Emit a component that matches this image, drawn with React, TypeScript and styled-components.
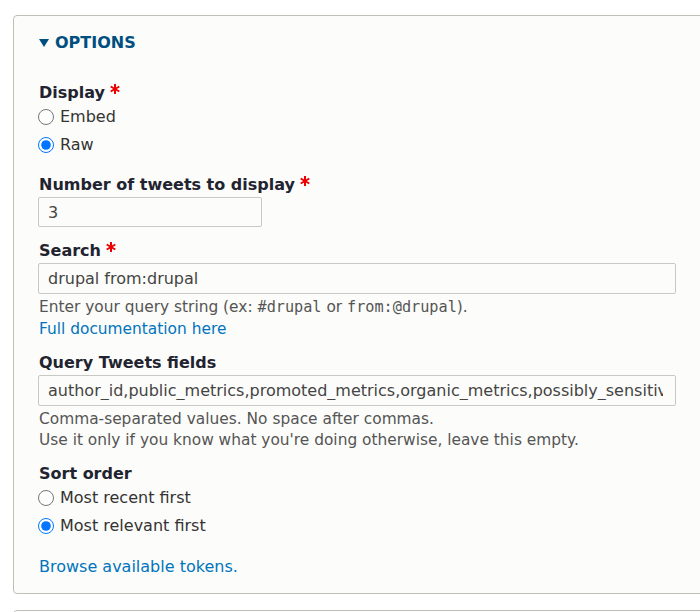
import React from "react";
import styled, { createGlobalStyle } from "styled-components";

const Global = createGlobalStyle`
  html, body { margin: 0; padding: 0; background: #fff; }
  body {
    font-family: "DejaVu Sans", "Noto Sans", sans-serif;
    font-size: 16px;
    color: #333;
    overflow: hidden;
    width: 700px;
    height: 612px;
  }
`;

const Page = styled.div`
  padding: 15px 0 0 13px;
  display: flex;
  flex-direction: column;
  gap: 16px;
`;

const Details = styled.div`
  width: 720px;
  box-sizing: border-box;
  border: 1px solid #bfbfba;
  border-radius: 4px;
  background: #fcfcfa;
  padding: 17px 25px 16px 25px;
`;

const NextDetails = styled(Details)`
  height: 40px;
  padding: 0;
`;

const Summary = styled.div`
  display: flex;
  align-items: center;
  gap: 6px;
  height: 20px;
  font-weight: bold;
  text-transform: uppercase;
  color: #004f80;
  line-height: 20px;
  margin-bottom: 30px;
`;

const Item = styled.div<{ $gap?: number }>`
  display: flex;
  flex-direction: column;
  margin-bottom: ${(p) => p.$gap ?? 13}px;
`;

const Label = styled.div`
  font-weight: bold;
  height: 20px;
  line-height: 20px;
  color: #222330;
  margin-bottom: 2px;
`;

const Star = styled.svg`
  width: 10px;
  height: 10px;
  margin-left: 5px;
  vertical-align: top;
  margin-top: 1px;
`;

const RadioGroup = styled.div`
  display: flex;
  flex-direction: column;
  margin-top: -2px;
`;

const RadioRow = styled.label`
  display: flex;
  align-items: center;
  height: 28px;
  line-height: 20px;
  color: #333;
  input {
    margin: 0 6px 0 -1px;
    width: 16px;
    height: 16px;
  }
`;

const Input = styled.input<{ $w?: number }>`
  box-sizing: border-box;
  width: ${(p) => (p.$w ? `${p.$w}px` : "638px")};
  height: ${(p) => (p.$w ? 30 : 31)}px;
  border: 1px solid #c8c8c4;
  border-radius: 2px;
  background: #fcfcfa;
  font-family: "DejaVu Sans", sans-serif;
  font-size: 16px;
  color: #444;
  padding: 0 12px 0 9px;
  margin-left: -1px;
  outline: none;
`;

const Desc = styled.div`
  font-size: 15.4px;
  line-height: 21px;
  color: #555;
  margin-top: 3px;
  code {
    font-family: "DejaVu Sans Mono", monospace;
    font-size: 15.2px;
  }
`;

const Link = styled.a`
  color: #0074bd;
  text-decoration: none;
`;

const DocLink = styled(Link)`
  display: block;
  margin-top: 1px;
`;

const TokenLink = styled(Link)`
  display: block;
  line-height: 20px;
  margin-top: 17px;
`;

const Asterisk = () => (
  <Star viewBox="0 0 10 10">
    <g stroke="#e00" strokeWidth="2" strokeLinecap="butt">
      <line x1="5" y1="0" x2="5" y2="10" />
      <line x1="0.7" y1="2.5" x2="9.3" y2="7.5" />
      <line x1="0.7" y1="7.5" x2="9.3" y2="2.5" />
    </g>
  </Star>
);

const Triangle = () => (
  <svg width="10" height="8" viewBox="0 0 10 8">
    <polygon points="0,0 10,0 5,8" fill="#004f80" />
  </svg>
);

export default function App() {
  return (
    <>
      <Global />
      <Page>
        <Details>
          <Summary>
            <Triangle />
            Options
          </Summary>

          <Item $gap={16}>
            <Label>
              Display
              <Asterisk />
            </Label>
            <RadioGroup>
              <RadioRow>
                <input type="radio" name="display" />
                Embed
              </RadioRow>
              <RadioRow>
                <input type="radio" name="display" defaultChecked />
                Raw
              </RadioRow>
            </RadioGroup>
          </Item>

          <Item $gap={14}>
            <Label>
              Number of tweets to display
              <Asterisk />
            </Label>
            <Input $w={224} defaultValue="3" />
          </Item>

          <Item $gap={13}>
            <Label>
              Search
              <Asterisk />
            </Label>
            <Input defaultValue="drupal from:drupal" />
            <Desc>
              Enter your query string (ex: <code>#drupal</code> or{" "}
              <code>from:@drupal</code>).
              <DocLink href="#">Full documentation here</DocLink>
            </Desc>
          </Item>

          <Item $gap={13}>
            <Label>Query Tweets fields</Label>
            <Input defaultValue="author_id,public_metrics,promoted_metrics,organic_metrics,possibly_sensitive" />
            <Desc>
              Comma-separated values. No space after commas.
              <br />
              Use it only if you know what you're doing otherwise, leave this empty.
            </Desc>
          </Item>

          <Item $gap={0}>
            <Label>Sort order</Label>
            <RadioGroup>
              <RadioRow>
                <input type="radio" name="sort" />
                Most recent first
              </RadioRow>
              <RadioRow>
                <input type="radio" name="sort" defaultChecked />
                Most relevant first
              </RadioRow>
            </RadioGroup>
          </Item>

          <TokenLink href="#">Browse available tokens.</TokenLink>
        </Details>
        <NextDetails />
      </Page>
    </>
  );
}
